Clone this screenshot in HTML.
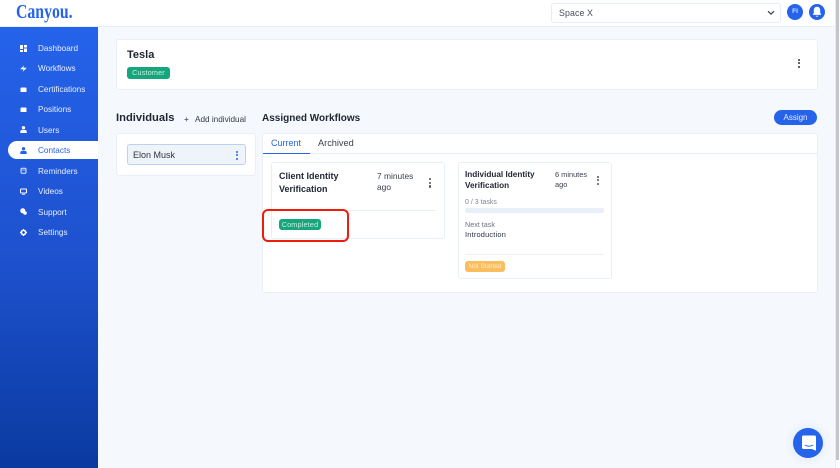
<!DOCTYPE html>
<html lang="en">
<head>
<meta charset="utf-8">
<title>Canyou</title>
<style>
*{box-sizing:border-box}
html,body{margin:0;padding:0}
body{width:840px;height:468px;overflow:hidden;background:#f5f8fc;font-family:"Liberation Sans",sans-serif;color:#1f2533;position:relative}
.a{position:absolute;white-space:nowrap}
.top{position:absolute;left:0;top:0;width:836px;height:27px;background:#fff;border-bottom:1px solid #e8eef6}
.side{position:absolute;left:0;top:27px;width:98px;height:441px;background:linear-gradient(180deg,#2563eb 0%,#1d50cc 55%,#0a3aa0 100%)}
.logo{left:16px;top:0;font-family:"Liberation Serif",serif;font-weight:700;font-size:20.5px;color:#2563eb;transform:scaleX(.77);transform-origin:left top;line-height:24px}
.nav{left:38px;font-size:8.2px;color:#e8efff;line-height:12px}
.ic{position:absolute;left:20px;width:7px;height:7px}
.card{position:absolute;background:#fff;border:1px solid #e9eff7;border-radius:3px}
.badge{position:absolute;border-radius:3px;font-size:7.2px;line-height:11px;text-align:center;color:#cdeee2;letter-spacing:.2px}
.dots{position:absolute;width:2.4px}
.dots i{display:block;width:2.4px;height:2.4px;border-radius:50%;background:#2b3140;margin-bottom:1.2px}
.t{font-weight:700;color:#1f2533}
</style>
</head>
<body>
<div class="top"></div>
<div class="a logo">Canyou.</div>

<div class="a" style="left:551px;top:3px;width:230px;height:20px;background:#fff;border:1px solid #e6edf7;border-radius:3px"></div>
<div class="a" style="left:559px;top:7px;font-size:8.800px;line-height:12px;letter-spacing:.1px;color:#4a505c">Space X</div>
<svg class="a" style="left:767px;top:10px" width="8" height="6" viewBox="0 0 8 6"><path d="M1 1.200 L4 4.200 L7 1.200" fill="none" stroke="#3a404c" stroke-width="1.200"/></svg>
<div class="a" style="left:787px;top:4px;width:16px;height:16px;border-radius:50%;background:#2563eb;color:#dbe6ff;font-size:6.500px;line-height:16px;text-align:center;font-weight:700">FI</div>
<div class="a" style="left:809px;top:4px;width:16px;height:16px;border-radius:50%;background:#2563eb"></div>
<svg class="a" style="left:809px;top:4px" width="16" height="16" viewBox="0 0 16 16"><path d="M8 2.800 C5.700 2.800 4.800 4.600 4.800 6.500 V9 L3.600 10.900 H12.400 L11.200 9 V6.500 C11.200 4.600 10.300 2.800 8 2.800Z M6.500 11.700 a1.600 1.600 0 0 0 3 0Z" fill="#fff"/></svg>

<div class="side"></div>
<div class="a" style="left:8px;top:141px;width:90px;height:18px;background:#fff;border-radius:9px 0 0 9px"></div>

<svg class="ic" style="top:44.500px" viewBox="0 0 7 7"><path d="M0 0H3V4H0Z M4 0H7V2.500H4Z M4 3.500H7V7H4Z M0 5H3V7H0Z" fill="#fff"/></svg>
<div class="a nav" style="top:42.500px">Dashboard</div>
<svg class="ic" style="top:65px" viewBox="0 0 7 7"><path d="M4.200 0.300 L3.200 2.800 H6.800 L2.800 6.700 L3.500 4.200 H0.200Z" fill="#fff"/></svg>
<div class="a nav" style="top:63px">Workflows</div>
<svg class="ic" style="top:85.500px" viewBox="0 0 7 7"><path d="M0.500 2.500 Q0.500 1.500 1.500 1.500 H5.500 Q6.500 1.500 6.500 2.500 V6 H0.500Z" fill="#fff"/></svg>
<div class="a nav" style="top:83.500px">Certifications</div>
<svg class="ic" style="top:106px" viewBox="0 0 7 7"><path d="M0.500 2.500 Q0.500 1.500 1.500 1.500 H5.500 Q6.500 1.500 6.500 2.500 V6 H0.500Z" fill="#fff"/></svg>
<div class="a nav" style="top:104px">Positions</div>
<svg class="ic" style="top:126px" viewBox="0 0 7 7"><circle cx="3.500" cy="1.800" r="1.700" fill="#fff"/><path d="M0.300 7 V5.500 Q0.300 4 2 4 H5 Q6.700 4 6.700 5.500 V7Z" fill="#fff"/></svg>
<div class="a nav" style="top:124.500px">Users</div>
<svg class="ic" style="top:146.500px" viewBox="0 0 7 7"><circle cx="3.500" cy="1.800" r="1.700" fill="#2563eb"/><path d="M0.300 7 V5.500 Q0.300 4 2 4 H5 Q6.700 4 6.700 5.500 V7Z" fill="#2563eb"/></svg>
<div class="a nav" style="top:145px;color:#2563eb">Contacts</div>
<svg class="ic" style="top:167px" viewBox="0 0 7 7"><rect x="1" y="1.200" width="5" height="5" rx="1" fill="none" stroke="#dfe8ff" stroke-width="1"/><path d="M1 3H6" stroke="#dfe8ff" stroke-width=".7"/></svg>
<div class="a nav" style="top:165.500px">Reminders</div>
<svg class="ic" style="top:187.500px" viewBox="0 0 7 7"><rect x="0.500" y="1" width="6" height="4" rx=".6" fill="none" stroke="#fff" stroke-width="1"/><path d="M2 6.300H5" stroke="#fff" stroke-width=".8"/></svg>
<div class="a nav" style="top:186px">Videos</div>
<svg class="ic" style="top:208px" viewBox="0 0 7 7"><circle cx="2.800" cy="2.800" r="2.500" fill="#fff"/><circle cx="5" cy="5" r="1.800" fill="#fff"/></svg>
<div class="a nav" style="top:206.500px">Support</div>
<svg class="ic" style="top:228.500px" viewBox="0 0 7 7"><circle cx="3.500" cy="3.500" r="2.200" fill="none" stroke="#fff" stroke-width="1.700"/><path d="M3.500 0V1.500M3.500 5.500V7M0 3.500H1.500M5.500 3.500H7" stroke="#fff" stroke-width="1"/></svg>
<div class="a nav" style="top:227px">Settings</div>

<div class="card" style="left:116px;top:39px;width:702px;height:51px"></div>
<div class="a t" style="left:127px;top:48px;font-size:11px;line-height:14px">Tesla</div>
<div class="badge" style="left:127px;top:67px;width:43px;height:12px;background:#16a67e">Customer</div>
<div class="dots" style="left:798px;top:58.500px"><i></i><i></i><i></i></div>

<div class="a t" style="left:116px;top:111px;font-size:11.200px;line-height:14px">Individuals</div>
<div class="a" style="left:184px;top:113px;font-size:8.400px;line-height:13px;color:#333a47">+</div>
<div class="a" style="left:195px;top:113px;font-size:8.200px;line-height:13px;color:#333a47">Add individual</div>
<div class="card" style="left:116px;top:133px;width:140px;height:43px"></div>
<div class="a" style="left:127px;top:144px;width:119px;height:21px;background:#eff4fb;border:1px solid #b9d2f5;border-radius:3px"></div>
<div class="a" style="left:133px;top:149px;font-size:9px;line-height:13px;color:#2c3240">Elon Musk</div>
<div class="dots" style="left:236px;top:150.500px"><i style="background:#2563eb"></i><i style="background:#2563eb"></i><i style="background:#2563eb"></i></div>

<div class="a t" style="left:262px;top:112px;font-size:10px;line-height:14px">Assigned Workflows</div>
<div class="a" style="left:774px;top:110px;width:43px;height:15px;border-radius:8px;background:#2563eb;color:#e4ecff;font-size:8px;line-height:15px;text-align:center">Assign</div>

<div class="card" style="left:262px;top:133px;width:556px;height:160px"></div>
<div class="a" style="left:263px;top:153px;width:554px;height:1px;background:#e6edf6"></div>
<div class="a" style="left:263px;top:152.500px;width:47px;height:1.500px;background:#2563eb"></div>
<div class="a" style="left:271px;top:137px;font-size:9px;line-height:13px;color:#2563eb">Current</div>
<div class="a" style="left:318px;top:137px;font-size:9.200px;line-height:13px;color:#3a404c">Archived</div>

<div class="card" style="left:271px;top:162px;width:174px;height:77px"></div>
<div class="a t" style="left:279px;top:170px;font-size:9px;line-height:12.500px">Client Identity<br>Verification</div>
<div class="a" style="left:377px;top:171px;font-size:8.400px;line-height:11px;color:#3a404c">7 minutes<br>ago</div>
<div class="dots" style="left:428.500px;top:178px"><i style="background:#4a505c"></i><i style="background:#4a505c"></i><i style="background:#4a505c"></i></div>
<div class="a" style="left:279px;top:210px;width:157px;height:1px;background:#e9eff7"></div>
<div class="badge" style="left:279px;top:219px;width:42px;height:11px;background:#16a67e">Completed</div>
<div class="a" style="left:262px;top:209px;width:87px;height:33px;border:2px solid #ef1c0c;border-radius:6px"></div>

<div class="card" style="left:458px;top:162px;width:154px;height:117px"></div>
<div class="a t" style="left:465px;top:169px;font-size:8.200px;line-height:11px">Individual Identity<br>Verification</div>
<div class="a" style="left:555px;top:170px;font-size:7.400px;line-height:10px;color:#3a404c">6 minutes<br>ago</div>
<div class="dots" style="left:596.500px;top:175.500px"><i style="background:#4a505c"></i><i style="background:#4a505c"></i><i style="background:#4a505c"></i></div>
<div class="a" style="left:465px;top:198px;font-size:7px;line-height:10px;color:#7d8592">0 / 3 tasks</div>
<div class="a" style="left:465px;top:208px;width:139px;height:5px;background:#e9eff7;border-radius:2px"></div>
<div class="a" style="left:465px;top:220px;font-size:7.200px;line-height:10px;color:#6d7480">Next task</div>
<div class="a" style="left:465px;top:229.500px;font-size:7.400px;line-height:10px;letter-spacing:.2px;color:#2c3240">Introduction</div>
<div class="a" style="left:465px;top:254px;width:139px;height:1px;background:#edf2f9"></div>
<div class="badge" style="left:465px;top:261px;width:40px;height:11px;background:#fbbe5f;color:#fdeac8;font-size:6.500px;letter-spacing:0">Not Started</div>

<div class="a" style="left:793px;top:428px;width:30px;height:30px;border-radius:50%;background:#2563eb;box-shadow:0 0 10px rgba(37,99,235,.12)"></div>
<svg class="a" style="left:793px;top:428px" width="30" height="30" viewBox="0 0 30 30"><path d="M10.500 7.500 Q9 7.500 9 9 V19.500 Q9 21 10.500 21 H23 V9 Q23 7.500 21.500 7.500Z" fill="#fff"/><path d="M23 19 V22.800 L19 21Z" fill="#fff"/><path d="M11.800 17 Q16 19.500 20.200 17" fill="none" stroke="#2563eb" stroke-width="1"/></svg>

<div class="a" style="left:835px;top:0;width:5px;height:468px;background:#fbfcfe;border-left:1px solid #e8ecf2"></div>
<div class="a" style="left:836px;top:0;width:3px;height:460px;background:#c2c4c7"></div>
</body>
</html>
